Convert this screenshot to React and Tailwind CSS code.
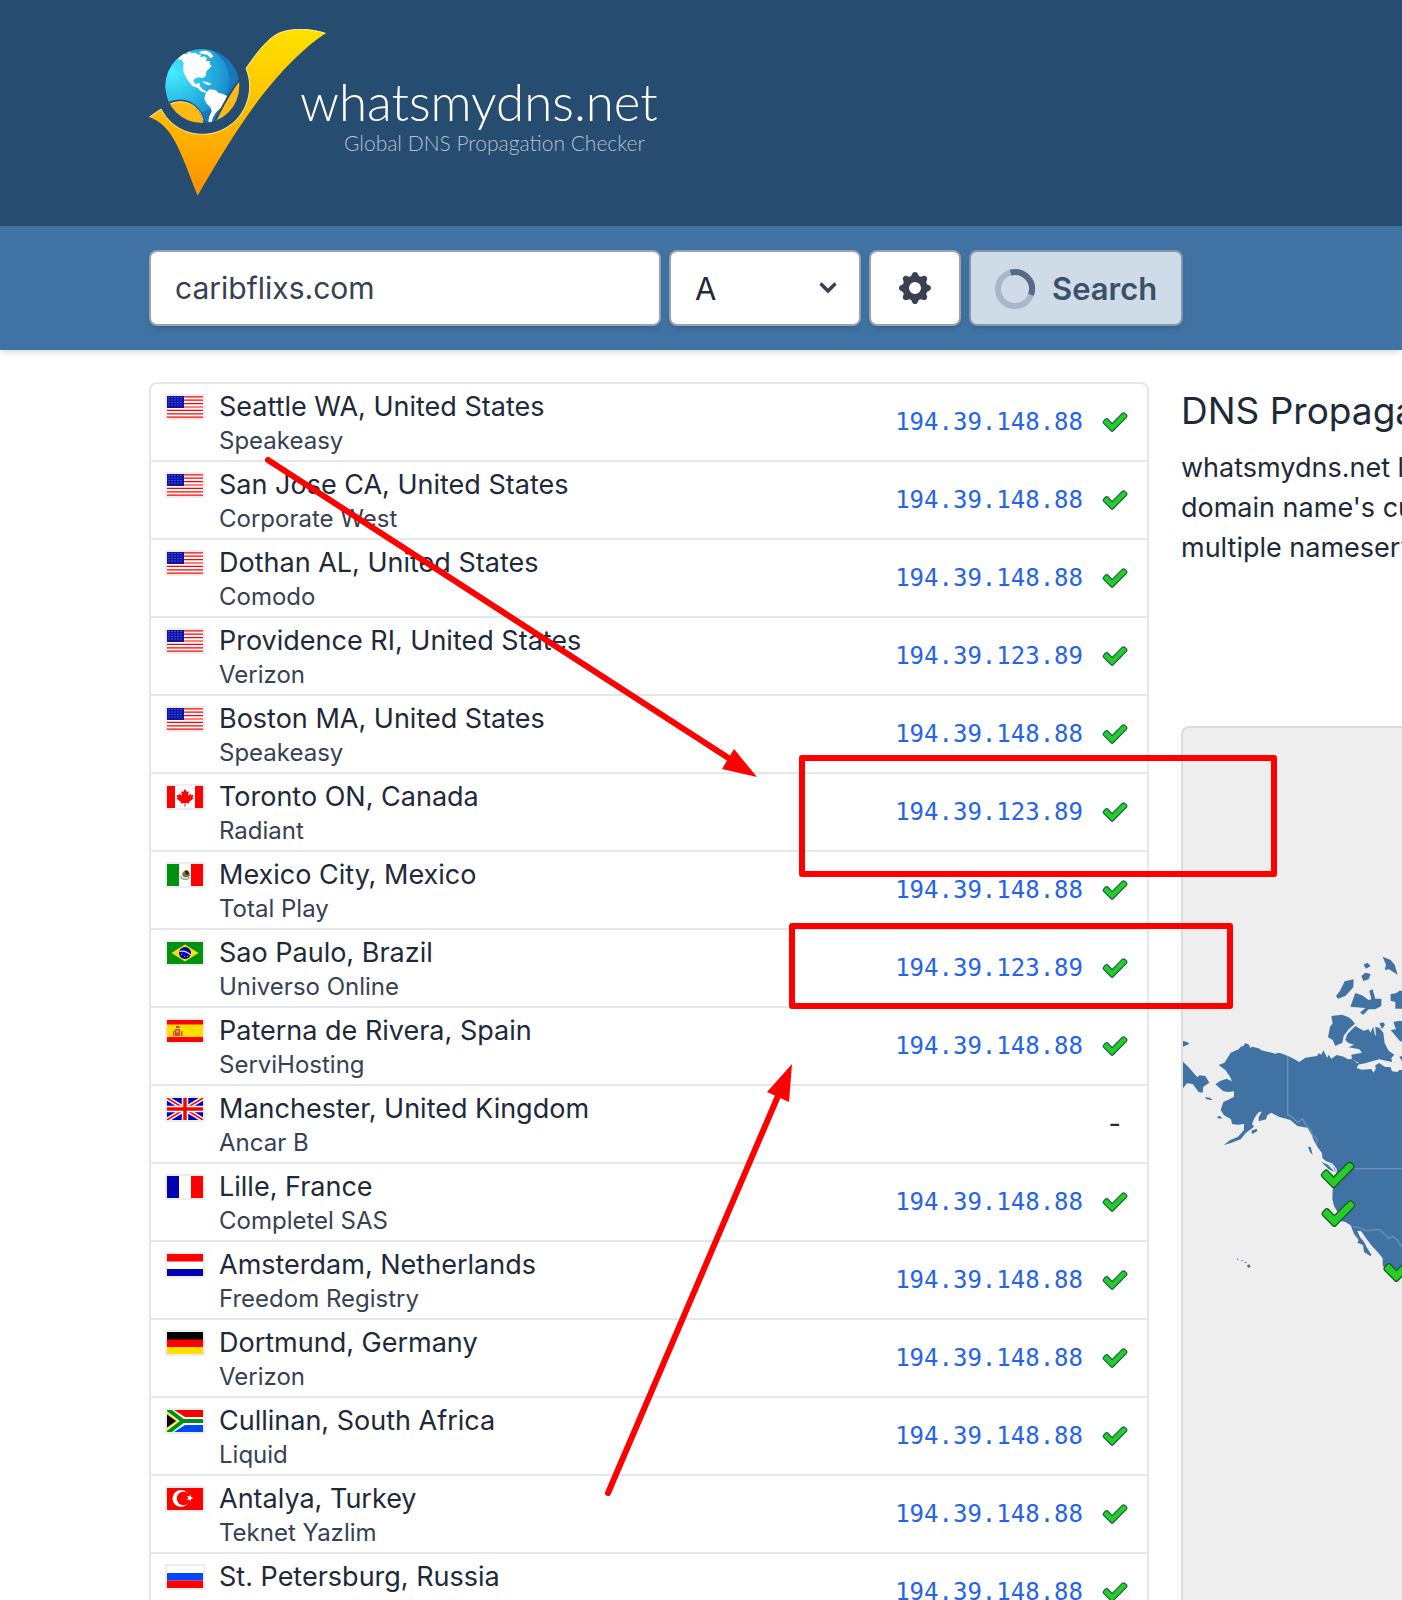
import React from 'react'

const servers = [
  { city: 'Seattle WA, United States', isp: 'Speakeasy', flag: 'us', ip: '194.39.148.88' },
  { city: 'San Jose CA, United States', isp: 'Corporate West', flag: 'us', ip: '194.39.148.88' },
  { city: 'Dothan AL, United States', isp: 'Comodo', flag: 'us', ip: '194.39.148.88' },
  { city: 'Providence RI, United States', isp: 'Verizon', flag: 'us', ip: '194.39.123.89' },
  { city: 'Boston MA, United States', isp: 'Speakeasy', flag: 'us', ip: '194.39.148.88' },
  { city: 'Toronto ON, Canada', isp: 'Radiant', flag: 'ca', ip: '194.39.123.89' },
  { city: 'Mexico City, Mexico', isp: 'Total Play', flag: 'mx', ip: '194.39.148.88' },
  { city: 'Sao Paulo, Brazil', isp: 'Universo Online', flag: 'br', ip: '194.39.123.89' },
  { city: 'Paterna de Rivera, Spain', isp: 'ServiHosting', flag: 'es', ip: '194.39.148.88' },
  { city: 'Manchester, United Kingdom', isp: 'Ancar B', flag: 'gb', ip: null },
  { city: 'Lille, France', isp: 'Completel SAS', flag: 'fr', ip: '194.39.148.88' },
  { city: 'Amsterdam, Netherlands', isp: 'Freedom Registry', flag: 'nl', ip: '194.39.148.88' },
  { city: 'Dortmund, Germany', isp: 'Verizon', flag: 'de', ip: '194.39.148.88' },
  { city: 'Cullinan, South Africa', isp: 'Liquid', flag: 'za', ip: '194.39.148.88' },
  { city: 'Antalya, Turkey', isp: 'Teknet Yazlim', flag: 'tr', ip: '194.39.148.88' },
  { city: 'St. Petersburg, Russia', isp: '', flag: 'ru', ip: '194.39.148.88' },
]

const pins = [
  [476, 695],
  [478, 811],
  [664, 976],
]

const stars = [3, 6, 9, 12, 15]

const flags = {
  us: (
    <>
      <path fill="#fff" d="M0 0h36v22H0z" />
      <path
        stroke="#ff0000"
        strokeWidth="1.2"
        d="M0 .8h36M0 4.2h36M0 7.6h36M0 11h36M0 14.4h36M0 17.8h36M0 21.2h36"
      />
      <path fill="#0a12a8" d="M0 0h17v12H0z" />
      {stars.map((x) => (
        <path key={x} stroke="#7f86e0" strokeWidth="1" strokeDasharray="1 1.5" d={`M${x - 1} 1v10`} />
      ))}
    </>
  ),
  ca: (
    <>
      <path fill="#fff" d="M0 0h36v22H0z" />
      <path fill="#ff0000" d="M0 0h8v22H0zM28 0h8v22h-8z" />
      <path
        fill="#ff0000"
        d="M18 3l2 3 1.800-.8-.8 4.500 2.500-2 .7 1.500 2.300-.4-1 3 1 .8-4.500 3.400.4 1.500-4-.6.100 3.600h-1l.1-3.600-4 .6.4-1.500L9.500 12.600l1-.8-1-3 2.300.4.7-1.500 2.500 2-.8-4.500L16 6z"
      />
    </>
  ),
  mx: (
    <>
      <path fill="#fff" d="M0 0h36v22H0z" />
      <path fill="#00920f" d="M0 0h12v22H0z" />
      <path fill="#ff0000" d="M24 0h12v22H24z" />
      <path fill="#8a6b3a" d="M15 10l2-3 3-1 2 2 1 3-2 2-3 .5-2-1z" />
      <path fill="#2b2b20" d="M18 6.500l3 .5 1 3-1.500 1-2-1z" />
      <path fill="none" stroke="#7fae8a" strokeWidth="1.2" d="M13.500 12c1 4 7.500 5 9 .5" />
    </>
  ),
  br: (
    <>
      <path fill="#00920f" d="M0 0h36v22H0z" />
      <path fill="#ffde00" d="M18 2.500L31.500 11 18 19.500 4.500 11z" />
      <circle cx="18" cy="11" r="6" fill="#0000b4" />
      <path fill="none" stroke="#d7e4f2" strokeWidth="1.2" d="M12.500 9.500c4-1 8 .5 11 3.500" />
      <path fill="#9fb2ee" d="M14 12h1v1h-1zM17 14h1v1h-1zM20 14h1v1h-1z" />
    </>
  ),
  es: (
    <>
      <path fill="#ff0000" d="M0 0h36v22H0z" />
      <path fill="#ffde00" d="M0 4.500h36v12.500H0z" />
      <path fill="#d8452a" d="M8 9h5v7H8zM6 11h1.500v5H6zM14 11h1.500v5H14z" />
      <path fill="#b4502e" d="M9 6h3.500v2H9z" />
      <path fill="#f2c9b5" d="M9.500 10.500h2v2h-2z" />
    </>
  ),
  gb: (
    <>
      <path fill="#0000b4" d="M0 0h36v22H0z" />
      <path stroke="#fff" strokeWidth="4.500" d="M0 0l36 22M36 0L0 22" />
      <path stroke="#ff0000" strokeWidth="1.500" d="M0 0l36 22M36 0L0 22" />
      <path stroke="#fff" strokeWidth="6.500" d="M18 0v22M0 11h36" />
      <path stroke="#ff0000" strokeWidth="3.500" d="M18 0v22M0 11h36" />
    </>
  ),
  fr: (
    <>
      <path fill="#fff" d="M0 0h36v22H0z" />
      <path fill="#0000b4" d="M0 0h12v22H0z" />
      <path fill="#ff0000" d="M24 0h12v22H24z" />
    </>
  ),
  nl: (
    <>
      <path fill="#fff" d="M0 0h36v22H0z" />
      <path fill="#ff0000" d="M0 0h36v7.500H0z" />
      <path fill="#0000b4" d="M0 15h36v7H0z" />
    </>
  ),
  de: (
    <>
      <path fill="#000" d="M0 0h36v22H0z" />
      <path fill="#ff0000" d="M0 7.500h36V15H0z" />
      <path fill="#ffde00" d="M0 15h36v7H0z" />
    </>
  ),
  za: (
    <>
      <path fill="#fff" d="M0 0h36v22H0z" />
      <path fill="#ff0000" d="M7 0h29v7H18z" />
      <path fill="#0048ff" d="M7 22h29v-7H18z" />
      <path fill="none" stroke="#00920f" strokeWidth="4" d="M-1-2l17 13L-1 24M16 11h20" />
      <path fill="#ffde00" d="M0 2.500L11 11 0 19.500z" />
      <path fill="#000" d="M0 4.500L9 11l-9 6.500z" />
    </>
  ),
  tr: (
    <>
      <path fill="#ff0000" d="M0 0h36v22H0z" />
      <circle cx="14" cy="10.500" r="8.500" fill="#fff" />
      <circle cx="16.500" cy="10.500" r="6.800" fill="#ff0000" />
      <path fill="#fff" d="M26.500 10l-2.600.9v2.700l-1.700-2.200-2.600.9 1.600-2.300-1.600-2.200 2.600.8 1.700-2.200v2.700z" />
    </>
  ),
  ru: (
    <>
      <path fill="#fff" d="M0 0h36v22H0z" />
      <path fill="#0048ff" d="M0 7h36v7.500H0z" />
      <path fill="#ff0000" d="M0 14.500h36V22H0z" />
    </>
  ),
}

const checkPath =
  'M4 36Q0 40 4 45L35 76Q39 80 43 76L99 19Q102 14 98 9L91 3Q86 0 81 4L39 46L21 27Q17 23 12 27Z'

function Flag({ code }) {
  return (
    <span className="block h-[26px] w-10 border-2 border-[#eeeeee]">
      <svg viewBox="0 0 36 22" className="block h-[22px] w-9">
        {flags[code]}
      </svg>
    </span>
  )
}

function Check() {
  return (
    <svg viewBox="-2 -2 106 83" className="ml-auto h-5 w-[26px]">
      <path d={checkPath} fill="#26cd26" stroke="#1c5f52" strokeWidth="5" />
    </svg>
  )
}

function Logo() {
  return (
    <svg viewBox="12 21 531 501" className="h-[167px] w-[177px] shrink-0">
      <defs>
        <linearGradient id="tick" x1="0" y1="0" x2="0" y2="1">
          <stop offset="0" stopColor="#ffe100" />
          <stop offset="0.5" stopColor="#ffbe00" />
          <stop offset="1" stopColor="#ff8f00" />
        </linearGradient>
        <radialGradient id="sea" cx="0.2" cy="0.4" r="0.8">
          <stop offset="0" stopColor="#45ecff" />
          <stop offset="0.5" stopColor="#2cc0ea" />
          <stop offset="1" stopColor="#1a8fd0" />
        </radialGradient>
        <clipPath id="globe">
          <circle cx="172" cy="192" r="111" />
        </clipPath>
      </defs>
      {/* Tick */}
      <path
        fill="url(#tick)"
        d="M13 285L48 261C75 312 122 337 173 337C250 337 314 273 314 193C314 174 310 156 303 139C340 85 372 45 405 32C445 17 500 20 542 34C480 74 410 145 350 222C280 314 215 422 158 521C135 465 118 412 92 362C70 320 45 297 13 285Z"
      />
      <path
        fill="none"
        stroke="#ffe9a6"
        strokeWidth="3"
        d="M13 285L48 261C75 312 122 337 173 337C250 337 314 273 314 193C314 174 310 156 303 139C340 85 372 45 405 32C445 17 500 20 542 34"
      />
      {/* Globe */}
      <g clipPath="url(#globe)">
        <path fill="#1878bd" d="M61 81h222v222H61z" />
        <ellipse cx="146" cy="172" rx="107" ry="100" fill="url(#sea)" />
        <path
          fill="#fff"
          d="M100 108L115 95L126 96L132 88L140 94L152 92L160 98L168 97L166 106L178 103L186 108L182 116L196 118L194 127L200 132L192 140L184 148L182 162L174 168L162 166L148 170L145 178L152 186L164 182L164 192L172 202L184 208L178 212L166 206L158 198L142 192L132 180L122 164L116 152L114 136L116 124L110 114L98 112Z"
        />
        <path fill="#fff" d="M162 92C170 84 195 82 205 104L196 108L186 98L172 96Z" />
        <path fill="#fff" d="M172 178L186 180L200 186L190 190L178 184Z" />
        <path
          fill="#fff"
          d="M182 212L194 202L212 204L220 212L234 216L246 222L240 240L230 256L214 270L204 286L200 302L190 302L192 286L200 268L196 256L184 244L178 230Z"
        />
        <path
          fill="#ffb914"
          stroke="#264c70"
          strokeWidth="6"
          d="M70 243C110 226 165 235 180 310L130 320L80 280Z"
        />
        <path fill="none" stroke="#ffe48a" strokeWidth="3" d="M78 245C112 232 160 240 175 296" />
        <path fill="#ffb914" stroke="#264c70" strokeWidth="6" d="M290 165C255 205 232 255 206 305L260 290L300 220Z" />
      </g>
    </svg>
  )
}

function Gear() {
  return (
    <svg viewBox="0 0 20 20" className="h-10 w-10" fill="#374151">
      <path
        fillRule="evenodd"
        clipRule="evenodd"
        d="M11.490 3.170c-.38-1.560-2.600-1.560-2.980 0a1.532 1.532 0 01-2.286.948c-1.372-.836-2.942.734-2.106 2.106.54.886.061 2.042-.947 2.287-1.561.379-1.561 2.600 0 2.978a1.532 1.532 0 01.947 2.287c-.836 1.372.734 2.942 2.106 2.106a1.532 1.532 0 012.287.947c.379 1.561 2.600 1.561 2.978 0a1.533 1.533 0 012.287-.947c1.372.836 2.942-.734 2.106-2.106a1.533 1.533 0 01.947-2.287c1.561-.379 1.561-2.600 0-2.978a1.532 1.532 0 01-.947-2.287c.836-1.372-.734-2.942-2.106-2.106a1.532 1.532 0 01-2.287-.947zM10 13a3 3 0 100-6 3 3 0 000 6z"
      />
    </svg>
  )
}

function Spinner() {
  return (
    <svg viewBox="0 0 42 42" className="h-[42px] w-[42px]" fill="none" strokeWidth="6">
      <circle cx="21" cy="21" r="17" stroke="#a9b7c8" />
      <path d="M16.600 4.600A17 17 0 0 1 37 26.800" stroke="#556a84" />
    </svg>
  )
}

function SearchBar() {
  const box =
    'h-[76px] rounded-lg border-2 border-[#9ca3af] bg-white shadow-md outline-none'

  return (
    <div className="relative bg-[#4073a4] py-6 pl-[149px] shadow-md">
      <form className="flex gap-2" onSubmit={(e) => e.preventDefault()}>
        <input
          type="text"
          aria-label="Domain name"
          defaultValue="caribflixs.com"
          className={`${box} w-[512px] px-6 text-[30px] text-[#374151]`}
        />
        <div className="relative">
          <select
            aria-label="Record type"
            defaultValue="A"
            className={`${box} w-48 appearance-none px-6 pt-[2px] text-[31px] text-[#1f2937]`}
          >
            <option>A</option>
            <option>AAAA</option>
            <option>CNAME</option>
            <option>MX</option>
            <option>NS</option>
            <option>TXT</option>
          </select>
          <svg
            viewBox="0 0 18 12"
            className="pointer-events-none absolute top-8 right-6 h-3 w-[18px]"
            fill="none"
            stroke="#374151"
            strokeWidth="3.4"
          >
            <path d="M1.500 1.500L9 9l7.500-7.500" />
          </svg>
        </div>
        <button
          type="button"
          aria-label="Settings"
          className={`${box} flex w-[92px] items-center justify-center`}
        >
          <Gear />
        </button>
        <button
          type="submit"
          className="flex h-[76px] w-[214px] items-center gap-4 rounded-lg border-2 border-[#8497ae] bg-[#cfdbe7] pt-[2px] pl-[23px] text-[31px] font-semibold text-[#3c5068] shadow-md"
        >
          <Spinner />
          Search
        </button>
      </form>
    </div>
  )
}

function Servers() {
  return (
    <div className="w-[1000px] shrink-0 rounded-lg border-2 border-gray-200">
      <table className="w-full border-separate border-spacing-0">
        <tbody>
          {servers.map((server) => (
            <tr key={server.city} className="h-[78px]">
              <td className="w-[68px] border-b-2 border-gray-200 pt-[10px] pl-[14px] align-top">
                <Flag code={server.flag} />
              </td>
              <td className="border-b-2 border-gray-200 pt-[3px] align-top">
                <div className="text-[27px] leading-10 text-gray-800">{server.city}</div>
                <div className="text-2xl leading-7 text-gray-700">{server.isp}</div>
              </td>
              <td className="border-b-2 border-gray-200 text-right font-['DejaVu_Sans_Mono',monospace] text-2xl text-[#2563eb]">
                {server.ip}
              </td>
              <td className="w-16 border-b-2 border-gray-200 pr-[19px] text-right">
                {server.ip ? <Check /> : <span className="pr-[7px] text-[27px] text-gray-800">-</span>}
              </td>
            </tr>
          ))}
        </tbody>
      </table>
    </div>
  )
}

function WorldMap() {
  return (
    <div className="mt-[158px] overflow-hidden rounded-lg border-2 border-[#dddddd] bg-[#eeeeee]">
      <svg viewBox="63 -606 720 2700" className="block h-[900px] w-[240px]">
        <g fill="#4073a4">
          {/* Mainland */}
          <path d="M170 405L187 398L196 385L206 368L230 358L236 350L244 348L250 339L262 345L264 354L270 350L290 355L298 361L320 366L340 371L350 368L365 373L378 378L395 386L412 396L430 383L450 380L465 378L470 370L478 374L484 361L496 384L500 374L508 386L524 375L545 380L558 388L570 387L590 402L584 414L600 419L628 417L634 428L641 418L640 406L652 399L668 410L686 412L690 424L706 426L712 420L783 420L783 1040L700 1025L662 1008L662 985L650 970L632 950L625 942L610 922L598 904L586 902L594 922L606 935L614 952L628 974L626 979L606 966L603 945L586 938L590 930L576 912L566 886L550 876L532 872L528 848L516 828L511 806L512 780L516 756L522 730L512 708L492 694L481 684L480 670L466 650L455 630L448 612L436 593L406 588L385 570L350 560L328 548L316 556L312 568L290 574L290 562L300 544L288 548L276 566L270 582L276 590L252 608L236 628L205 640L185 645L205 630L228 620L246 600L246 582L226 584L210 582L207 568L186 556L176 540L184 516L202 508L216 500L216 484L200 486L184 484L160 463L176 452L194 446L210 454L204 440L190 420Z" />
          {/* Arctic islands */}
          <path d="M508 258L540 254L560 262L570 270L579 281L560 298L545 318L541 338L520 348L512 330L498 322L504 290L512 280Z" />
          <path d="M580 288L594 296L605 302L620 298L625 308L634 290L638 312L642 318L640 290L652 294L664 308L668 340L680 362L697 374L688 384L690 396L672 392L652 388L630 394L610 400L586 404L590 398L570 388L568 374L600 368L592 358L560 352L576 344L558 338L550 330L556 312Z" />
          <path d="M652 280L664 277L669 284L660 298Z" />
          <path d="M548 154L575 148L574 172L550 198L528 206L522 198L534 182Z" />
          <path d="M580 189L600 196L620 210L628 208L622 182L632 178L640 206L658 206L658 228L640 238L620 238L604 254L594 248L610 234L565 230Z" />
          <path d="M605 104L616 98L626 108L612 116ZM598 138L610 128L626 132L620 148L604 153Z" />
          <path d="M662 80L686 90L698 104L707 134L690 124L682 118L668 120L672 104Z" />
          <path d="M686 192L702 190L712 182L783 182L783 236L700 236L700 216L686 212ZM694 276L712 272L783 290L783 340L714 334L686 300L702 298ZM712 380L783 360L783 395L720 394Z" />
          {/* Siberia edge and small islands */}
          <path d="M63 333L76 336L82 342L63 350ZM63 395L80 412L106 442L112 436L130 438L142 458L124 470L122 488L110 486L92 462L75 460L63 475Z" />
          <path d="M128 502L144 503L153 511L134 508ZM165 560L175 558L180 566L168 565ZM268 602L284 596L286 604L270 612ZM438 652L446 650L452 675L444 666ZM478 695L498 704L518 726L500 718Z" />
          <path d="M255 1006L262 1003L266 1010L258 1014ZM225 986h4v3h-4zM238 990h4v3h-4zM248 996h5v3h-5z" />
        </g>
        <g fill="none" stroke="#6a93bb" strokeWidth="4">
          <path d="M377 378V555L390 560L406 577L422 566L430 582L444 598L452 616L466 628L464 640" />
          <path d="M578 716H783" />
          <path d="M573 890L590 892L612 902L652 898L666 911L680 926L692 918L706 930L720 952L740 970" />
        </g>
        <path fill="none" stroke="#eeeeee" strokeWidth="4" d="M482 692L510 702L522 718V730" />
        {pins.map(([x, y]) => (
          <path
            key={y}
            d={checkPath}
            transform={`translate(${x} ${y})`}
            fill="#26cd26"
            stroke="#1c5a2c"
            strokeWidth="4"
          />
        ))}
      </svg>
    </div>
  )
}

// Red boxes and arrows drawn on top of the results
function Markup() {
  return (
    <svg
      viewBox="0 0 1402 1600"
      className="pointer-events-none absolute top-0 left-0 h-[1600px] w-[1402px]"
      fill="none"
      stroke="#ff0000"
      strokeWidth="6"
      strokeLinecap="round"
      strokeLinejoin="round"
    >
      <rect x="802" y="758" width="472" height="116" />
      <rect x="792" y="926" width="438" height="80" />
      <path d="M268 460L730 759M608 1493L778 1096" />
      <path
        fill="#ff0000"
        stroke="none"
        d="M757 777L734 749L722 769ZM792 1064L767 1092L789 1102Z"
      />
    </svg>
  )
}

export default function App() {
  return (
    <div className="relative h-screen overflow-hidden bg-white font-['Inter',sans-serif]">
      <header className="h-[226px] bg-[#264c70] pt-[29px] pl-[149px]">
        <a href="#" className="flex font-['Lato',sans-serif] font-light">
          <Logo />
          <span className="-ml-[26px] flex flex-col pt-11">
            <span className="text-[51px] leading-[58px] text-white">whatsmydns.net</span>
            <span className="pl-11 text-[21px] leading-6 text-[#b4c1ce]">
              Global DNS Propagation Checker
            </span>
          </span>
        </a>
      </header>
      <SearchBar />
      <main className="flex gap-8 pt-8 pl-[149px]">
        <Servers />
        <section className="w-[1000px] shrink-0 text-gray-800">
          <h1 className="pt-2 text-[37px] leading-[42px]">DNS Propagation Checker</h1>
          <p className="mt-4 text-[27px] leading-10">
            whatsmydns.net lets you instantly perform a DNS lookup to check a
            <br />
            domain name's current IP address and DNS record information against
            <br />
            multiple nameservers located in different parts of the world.
          </p>
          <WorldMap />
        </section>
      </main>
      <Markup />
    </div>
  )
}
